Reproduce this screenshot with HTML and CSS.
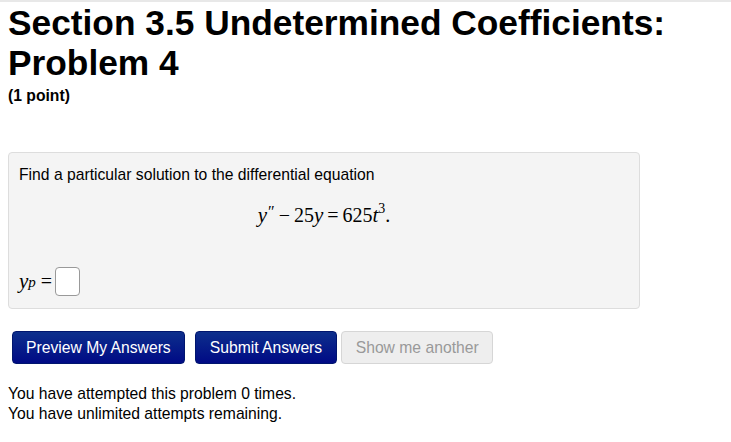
FILE: index.html
```html
<!DOCTYPE html>
<html>
<head>
<meta charset="utf-8">
<link rel="stylesheet" href="styles.css">
</head>
<body>
<div class="topline"></div>
<div class="page">
  <h1 class="title">Section 3.5 Undetermined Coefficients: Problem 4</h1>
  <div class="points">(1 point)</div>
  <div class="problem">
    <p class="prompt">Find a particular solution to the differential equation</p>
    <div class="equation"><span class="mi">y</span><span class="prime">″</span><span class="op">−</span><span class="mn">25</span><span class="mi">y</span><span class="op">=</span><span class="mn">625</span><span class="mi">t</span><sup class="sup">3</sup><span class="mn">.</span></div>
    <div class="answer-row">
      <span class="mi">y</span><sub class="sub">p</sub><span class="op eq">=</span><span class="answer-box"></span>
    </div>
  </div>
  <div class="buttons">
    <button class="btn btn-primary">Preview My Answers</button>
    <button class="btn btn-primary btn-submit">Submit Answers</button>
    <button class="btn btn-disabled">Show me another</button>
  </div>
  <div class="attempts">
    <div>You have attempted this problem 0 times.</div>
    <div>You have unlimited attempts remaining.</div>
  </div>
</div>
</body>
</html>
```
FILE: styles.css
```css
html, body {
  margin: 0;
  padding: 0;
  background: #fff;
}
body {
  font-family: "Liberation Sans", Arial, sans-serif;
  color: #000;
}
.topline {
  height: 2px;
  background: #e8e8e8;
}
.page {
  padding: 0 8px;
}
.title {
  margin: 1px 0 0 0;
  font-size: 35.3px;
  line-height: 40px;
  font-weight: bold;
  width: 700px;
}
.points {
  font-size: 15.7px;
  font-weight: bold;
  line-height: 18px;
  margin-top: 4px;
}
.problem {
  margin-top: 47px;
  width: 610px;
  background: #f4f4f4;
  border: 1px solid #dddddd;
  border-radius: 4px;
  padding: 12px 10px 11px 10px;
}
.prompt {
  margin: 0;
  font-size: 15.7px;
  line-height: 19px;
}
.equation {
  text-align: center;
  font-family: "Liberation Serif", serif;
  font-size: 20px;
  margin-top: 16px;
  line-height: 24px;
}
.mi {
  font-family: "Liberation Serif", serif;
  font-style: italic;
  font-size: 21px;
}
.mn {
  font-family: "Liberation Serif", serif;
  font-size: 20px;
}
.op {
  font-family: "Liberation Serif", serif;
  font-size: 20px;
  margin: 0 4px;
}
.prime {
  font-family: "Liberation Serif", serif;
  font-size: 16px;
  vertical-align: 5px;
  margin-left: 1px;
}
.sup {
  font-family: "Liberation Serif", serif;
  font-size: 14px;
  vertical-align: 9px;
  line-height: 0;
}
.answer-row {
  margin-top: 39px;
  display: flex;
  align-items: center;
  height: 31px;
}
.sub {
  font-family: "Liberation Serif", serif;
  font-style: italic;
  font-size: 15px;
  vertical-align: -3px;
  line-height: 0;
}
.eq {
  margin: 0 3px 0 5px;
}
.answer-box {
  display: inline-block;
  width: 23px;
  height: 27px;
  background: #fff;
  border: 1px solid #999;
  border-radius: 4px;
}
.buttons {
  margin-top: 22px;
  display: flex;
  padding-left: 4px;
}
.btn {
  font-family: "Liberation Sans", Arial, sans-serif;
  font-size: 15.7px;
  height: 33px;
  border-radius: 4px;
  padding: 0 13px;
}
.btn-primary {
  color: #fff;
  background: linear-gradient(#0d2f8c, #000a85);
  border: 1px solid #00156e;
  margin-right: 10px;
}
.btn-submit {
  padding: 0 14px;
  margin-right: 4px;
}
.btn-disabled {
  color: #999;
  background: #eeeeee;
  border: 1px solid #d6d6d6;
  padding: 0 13.5px;
}
.attempts {
  margin-top: 20px;
  font-size: 15.7px;
  line-height: 20px;
}
```
